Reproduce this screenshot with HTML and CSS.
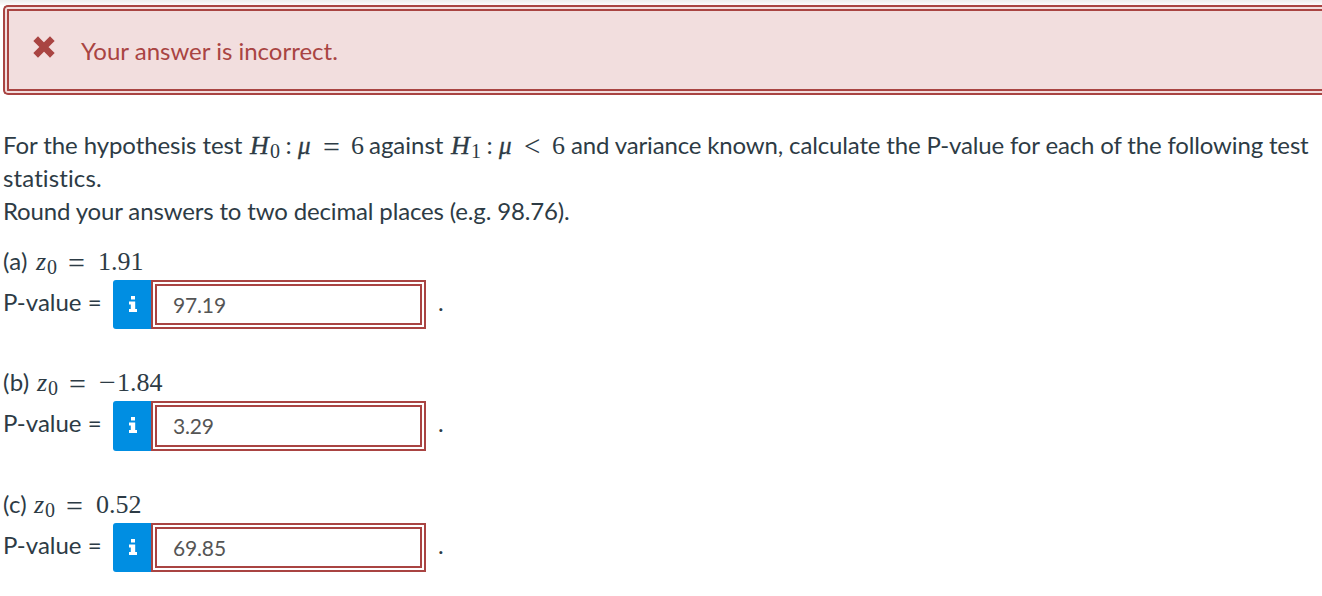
FILE: index.html
```html
<!DOCTYPE html>
<html lang="en"><head><meta charset="utf-8"><title>Hypothesis test</title><link rel="stylesheet" href="styles.css"></head>
<body>
<div class="top-shade"></div>
<div class="alert">
<svg class="cross" viewBox="0 0 22 22"><path d="M5 5L17 17M17 5L5 17"/></svg>
<span class="alert-text">Your answer is incorrect.</span></div>
<div class="question">
<div class="line"><span class="t1">For the hypothesis test</span><span class="math hyp"><i class="bold">H</i><sub>0</sub><span>:</span><i class="bold mu">μ</i><span class="op">=</span><span>6</span></span><span class="t2">against</span><span class="math hyp"><i class="bold">H</i><sub>1</sub><span>:</span><i class="bold mu">μ</i><span class="op lt">&lt;</span><span>6</span></span><span class="t3">and variance known, calculate the P-value for each of the following test</span></div>
<div class="line"><span class="single">statistics.</span></div>
<div class="line"><span>Round your answers to two decimal places (e.g. 98.76).</span></div>
</div>
<div class="part"><div class="label"><span class="letter-a">(a)</span><span class="math stat"><i>z</i><sub>0</sub><span class="op">=</span><span>1.91</span></span></div>
<div class="answer"><span class="pv">P-value =</span><span class="info"><svg viewBox="0 0 8 16"><path d="M2 0H6V3.5H2ZM0 5.5H6.2V13H8V16H0V13H1.8V8.5H0Z"/></svg></span><span class="field">97.19</span><span class="dot">.</span></div></div>
<div class="part part-b"><div class="label"><span class="letter-b">(b)</span><span class="math stat"><i>z</i><sub>0</sub><span class="op">=</span><span><span class="minus">−</span>1.84</span></span></div>
<div class="answer"><span class="pv">P-value =</span><span class="info"><svg viewBox="0 0 8 16"><path d="M2 0H6V3.5H2ZM0 5.5H6.2V13H8V16H0V13H1.8V8.5H0Z"/></svg></span><span class="field">3.29</span><span class="dot">.</span></div></div>
<div class="part"><div class="label"><span class="letter-c">(c)</span><span class="math stat"><i>z</i><sub>0</sub><span class="op">=</span><span>0.52</span></span></div>
<div class="answer"><span class="pv">P-value =</span><span class="info"><svg viewBox="0 0 8 16"><path d="M2 0H6V3.5H2ZM0 5.5H6.2V13H8V16H0V13H1.8V8.5H0Z"/></svg></span><span class="field">69.85</span><span class="dot">.</span></div></div>
</body></html>
```
FILE: styles.css
```css
*{box-sizing:border-box}
body{margin:0;padding:0 0 0 3px;height:596px;overflow:hidden;background:#fff;color:#2d3b45;font:24px/33px Lato,sans-serif}
.top-shade{height:5px;margin-left:-3px;background:linear-gradient(#ededed,#fbfbfb)}
.alert{height:90px;border:6px double #a94442;border-right:0;border-radius:5px 0 0 5px;background:#f2dede;display:flex;align-items:center;color:#a94442;padding-left:24px}
.cross{width:22px;height:22px;fill:none;stroke:#a94442;stroke-width:6.6;stroke-linecap:square;stroke-linejoin:round;margin:-7px 26px 0 0}
.question{margin-top:33px}
.line{height:33px;display:flex;white-space:nowrap;letter-spacing:-.15px}
.single{letter-spacing:.12px}
.t1{width:247px;letter-spacing:-.08px}
.t2{width:82px;letter-spacing:-.02px}
.math{display:grid;align-items:baseline;font-family:"Liberation Serif",serif;font-size:26px;white-space:nowrap;letter-spacing:0}
.hyp{grid-template-columns:20px 15px 13px 25px 28px 18px;width:119px;padding-top:1px}
.t3{margin-left:1px}
.bold{-webkit-text-stroke:.35px #2d3b45}
.mu{font-size:25px}
.stat{grid-template-columns:11px 21px 30px auto;padding-top:1px}
.op{font-size:30px;line-height:0;position:relative;top:3px}
.lt{font-size:29px;top:2px}
.minus{display:inline-block;width:18px;transform:scaleX(1.15);transform-origin:left}
sub{font-size:20px;line-height:0;position:relative;top:4px;vertical-align:baseline}
.part{height:121px;padding-top:17px}
.part-b{height:122px}
.label{height:36px;line-height:34px;display:flex;letter-spacing:.3px}
.letter-a{width:33px}.letter-b{width:34px}.letter-c{width:31px}
.answer{height:49px;display:flex}
.part-b .answer{height:50px}
.pv{width:110px;line-height:44px}
.info{width:38px;background:#008ee2;border-radius:3px 0 0 3px;display:flex;align-items:center;justify-content:center}
.info svg{width:8px;height:16px;fill:#fff;margin:-2px 0 0 2px}
.field{width:275px;border:6px double #a94442;padding-left:16px;font-size:21px;line-height:38px;color:#555;letter-spacing:-.15px}
.dot{margin-left:12px;line-height:44px}
```
